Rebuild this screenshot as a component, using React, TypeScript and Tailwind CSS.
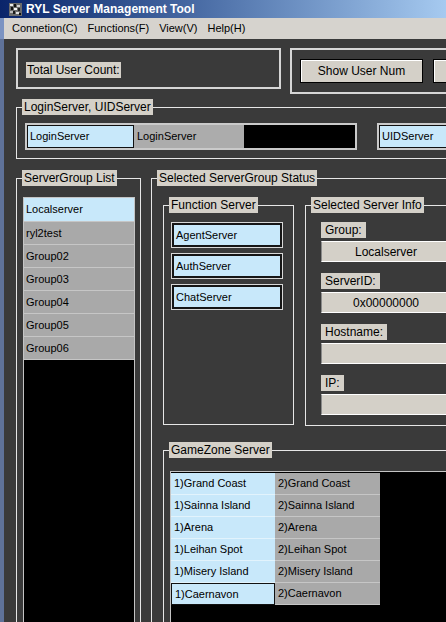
import React from 'react';

const BLUE = 'bg-[#c8e8fa]';

interface GroupBoxProps {
  title: string;
  className?: string;
  children?: React.ReactNode;
}

// classic win32 group frame with the caption sitting on the top line
const GroupBox: React.FC<GroupBoxProps> = ({ title, className, children }) => (
  <div className={`relative shrink-0 border border-[#e6e6e6] ${className ?? ''}`}>
    <span className="absolute -top-[9px] left-[5px] bg-[#d4d0c8] px-[2px] text-[12px] leading-[16px] text-black whitespace-nowrap">
      {title}
    </span>
    {children}
  </div>
);

const TitleIcon = () => (
  <svg width="13" height="13" viewBox="0 0 13 13" className="shrink-0">
    <rect width="13" height="13" fill="#6b6b6b" />
    <rect x="1" y="1" width="3" height="2" fill="#e8e8e8" />
    <rect x="5" y="1" width="2" height="3" fill="#111" />
    <rect x="8" y="2" width="3" height="2" fill="#d0d0d0" />
    <rect x="2" y="4" width="2" height="3" fill="#111" />
    <rect x="5" y="5" width="3" height="2" fill="#f4f4f4" />
    <rect x="9" y="5" width="2" height="3" fill="#222" />
    <rect x="1" y="8" width="3" height="2" fill="#bbb" />
    <rect x="4" y="8" width="2" height="3" fill="#1a1a1a" />
    <rect x="7" y="9" width="3" height="2" fill="#e0e0e0" />
    <rect x="10" y="10" width="2" height="2" fill="#111" />
  </svg>
);

const ServerButton: React.FC<{ label: string }> = ({ label }) => (
  <div className="w-[112px] h-[26px] border border-[#d8d8d8]">
    <div className={`h-full border-2 border-[#151515] ${BLUE} flex items-center pl-[2px] text-[11px] text-black`}>
      {label}
    </div>
  </div>
);

const InfoField: React.FC<{ label: string; value?: string }> = ({ label, value }) => (
  <div className="flex flex-col items-start">
    <span className="h-[16px] bg-[#d4d0c8] pl-[4px] pr-[4px] text-[12px] leading-[16px] text-black">{label}</span>
    <div className="mt-[3px] mb-[11px] w-[130px] h-[21px] bg-[#d4d0c8] border border-[#8a8a8a] border-t-white border-b-white flex items-center justify-center text-[12px] text-black">
      {value}
    </div>
  </div>
);

const groups = ['Localserver', 'ryl2test', 'Group02', 'Group03', 'Group04', 'Group05', 'Group06'];
const zones = ['Grand Coast', 'Sainna Island', 'Arena', 'Leihan Spot', 'Misery Island', 'Caernavon'];

const App: React.FC = () => {
  return (
    <div className="w-[446px] h-[622px] overflow-hidden flex flex-col font-['Liberation_Sans',Arial,sans-serif] select-none">
      {/* title bar */}
      <div className="h-[18px] shrink-0 flex items-center gap-[4px] pl-[9px] bg-linear-to-r from-[#0a246a] to-[#a6caf0]">
        <TitleIcon />
        <span className="text-[12px] font-bold text-white leading-none">RYL Server Management Tool</span>
      </div>

      {/* menu */}
      <div className="h-[21px] shrink-0 flex items-center gap-[10px] pl-[8px] bg-[#d6d3ce] border-l-4 border-[#7b93c2] text-[11px] text-black">
        <span>Connetion(C)</span>
        <span>Functions(F)</span>
        <span>View(V)</span>
        <span>Help(H)</span>
      </div>

      <div className="flex-1 min-h-0 bg-[#3a3a3a] border-l-4 border-[#5f7299] pl-[12px] pt-[9px] flex flex-col overflow-hidden">
        {/* top row */}
        <div className="flex items-start gap-[9px] shrink-0">
          <div className="w-[265px] h-[41px] shrink-0 border-2 border-[#d6d6d6] flex items-center pl-[8px] pt-[3px]">
            <span className="bg-[#d4d0c8] px-[1px] text-[12px] leading-[16px] text-black">Total User Count:</span>
          </div>
          <div className="w-[200px] h-[46px] shrink-0 border-2 border-[#d6d6d6] flex items-start gap-[10px] pl-[8px] pt-[9px]">
            <button className="w-[123px] h-[24px] shrink-0 bg-[#d4d0c8] border border-black shadow-[inset_1px_1px_0_#ffffff] text-[12px] text-black">
              Show User Num
            </button>
            <button className="w-[123px] h-[24px] shrink-0 bg-[#d4d0c8] border border-black shadow-[inset_1px_1px_0_#ffffff]" />
          </div>
        </div>

        {/* login / uid */}
        <GroupBox title="LoginServer, UIDServer" className="mt-[13px] w-[460px] h-[52px] pl-[8px] pt-[15px]">
          <div className="flex items-start gap-[20px]">
            <div className="w-[332px] h-[27px] shrink-0 border-2 border-[#cacaca] bg-black flex">
              <div className={`w-[107px] border border-[#111] ${BLUE} flex items-center pl-[2px] text-[11px] text-black`}>
                LoginServer
              </div>
              <div className="w-[110px] bg-[#acacac] flex items-center pl-[3px] text-[11px] text-black">LoginServer</div>
            </div>
            <div className="w-[100px] h-[27px] shrink-0 border-2 border-[#cacaca]">
              <div className={`h-full border border-[#111] ${BLUE} flex items-center pl-[2px] text-[11px] text-black`}>
                UIDServer
              </div>
            </div>
          </div>
        </GroupBox>

        <div className="mt-[19px] flex items-start gap-[10px] shrink-0">
          {/* server group list */}
          <GroupBox title="ServerGroup List" className="w-[125px] h-[460px] pl-[6px] pt-[18px]">
            <div className="w-[112px] h-[440px] border border-[#c4c4c4] bg-black flex flex-col">
              {groups.map((g, i) => (
                <div
                  key={g}
                  className={`h-[23px] shrink-0 flex items-center pl-[2px] text-[11px] text-black border-b border-[#c6c6c6] ${
                    i === 0 ? 'bg-[#c8e8fa] h-[24px]' : 'bg-[#a9a9a9]'
                  }`}
                >
                  {g}
                </div>
              ))}
            </div>
          </GroupBox>

          {/* selected group status */}
          <GroupBox title="Selected ServerGroup Status" className="w-[320px] h-[460px] pl-[11px] pt-[26px]">
            <div className="flex items-start gap-[11px]">
              <GroupBox title="Function Server" className="w-[131px] h-[220px] pl-[7px] pt-[16px]">
                <div className="flex flex-col gap-[5px]">
                  <ServerButton label="AgentServer" />
                  <ServerButton label="AuthServer" />
                  <ServerButton label="ChatServer" />
                </div>
              </GroupBox>
              <GroupBox title="Selected Server Info" className="w-[200px] h-[221px] pl-[15px] pt-[16px]">
                <InfoField label="Group:" value="Localserver" />
                <InfoField label="ServerID:" value="0x00000000" />
                <InfoField label="Hostname:" />
                <InfoField label="IP:" />
              </GroupBox>
            </div>

            <GroupBox title="GameZone Server" className="mt-[24px] w-[300px] h-[250px] pl-[6px] pt-[20px]">
              <div className="w-[290px] h-[220px] border-t border-l border-[#c4c4c4] bg-black pt-[1px]">
                <div className="grid grid-cols-[104px_105px]">
                  {zones.map((z, i) => (
                    <React.Fragment key={z}>
                      <div
                        className={`h-[22px] flex items-center pl-[3px] text-[11px] text-black ${BLUE} ${
                          i === zones.length - 1 ? 'border border-[#111]' : 'border-b border-[#e2f3fc]'
                        }`}
                      >
                        1){z}
                      </div>
                      <div className="h-[22px] flex items-center pl-[3px] text-[11px] text-black bg-[#a9a9a9] border-b border-[#c6c6c6]">
                        2){z}
                      </div>
                    </React.Fragment>
                  ))}
                </div>
              </div>
            </GroupBox>
          </GroupBox>
        </div>
      </div>
    </div>
  );
};

export default App;
